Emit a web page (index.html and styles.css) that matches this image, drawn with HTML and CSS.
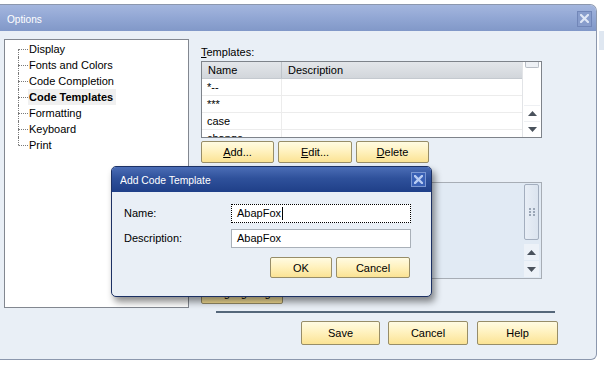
FILE: index.html
```html
<!DOCTYPE html>
<html>
<head>
<meta charset="utf-8">
<link rel="stylesheet" href="styles.css">
</head>
<body>
<div class="stage">
  <div class="backpiece"></div>
  <div class="window">
    <div class="titlebar">
      <span class="title">Options</span>
      <span class="close">
        <svg width="9" height="9" viewBox="0 0 9 9"><path d="M1 1 L8 8 M8 1 L1 8" stroke="#dfe7f6" stroke-width="2.2" stroke-linecap="square"/></svg>
      </span>
    </div>
    <div class="body">
      <div class="main">
        <div class="tree">
          <ul class="tree-list">
            <li class="node first"><span class="conn"><i></i><i></i></span><span class="txt">Display</span></li>
            <li class="node"><span class="conn"><i></i><i></i></span><span class="txt">Fonts and Colors</span></li>
            <li class="node"><span class="conn"><i></i><i></i></span><span class="txt">Code Completion</span></li>
            <li class="node"><span class="conn"><i></i><i></i></span><span class="txt sel">Code Templates</span></li>
            <li class="node"><span class="conn"><i></i><i></i></span><span class="txt">Formatting</span></li>
            <li class="node"><span class="conn"><i></i><i></i></span><span class="txt">Keyboard</span></li>
            <li class="node last"><span class="conn"><i></i><i></i></span><span class="txt">Print</span></li>
          </ul>
        </div>
        <div class="right">
          <div class="label"><u>T</u>emplates:</div>
          <div class="list">
            <div class="table">
              <div class="row hdr"><div class="c1">Name</div><div class="c2">Description</div></div>
              <div class="row"><div class="c1">*--</div><div class="c2"></div></div>
              <div class="row"><div class="c1">***</div><div class="c2"></div></div>
              <div class="row"><div class="c1">case</div><div class="c2"></div></div>
              <div class="row"><div class="c1">change</div><div class="c2"></div></div>
            </div>
            <div class="vscroll">
              <div class="thumb-top"></div>
              <div class="spacer"></div>
              <div class="arrow"><svg width="9" height="5" viewBox="0 0 9 5"><path d="M0 5 L4.5 0 L9 5 Z" fill="#4a525c"/></svg></div>
              <div class="arrow"><svg width="9" height="5" viewBox="0 0 9 5"><path d="M0 0 L4.5 5 L9 0 Z" fill="#4a525c"/></svg></div>
            </div>
          </div>
          <div class="btnrow">
            <button class="btn w73"><u>A</u>dd...</button>
            <button class="btn w74"><u>E</u>dit...</button>
            <button class="btn w73"><u>D</u>elete</button>
          </div>
          <div class="editor">
            <div class="edit-area"></div>
            <div class="vscroll2">
              <div class="thumb">
                <svg width="6" height="8" viewBox="0 0 6 8"><g fill="#9aa6b6"><rect x="0" y="0" width="2" height="2"/><rect x="4" y="0" width="2" height="2"/><rect x="0" y="3" width="2" height="2"/><rect x="4" y="3" width="2" height="2"/><rect x="0" y="6" width="2" height="2"/><rect x="4" y="6" width="2" height="2"/></g></svg>
              </div>
              <div class="arrow2"><svg width="9" height="5" viewBox="0 0 9 5"><path d="M0 5 L4.5 0 L9 5 Z" fill="#4a525c"/></svg></div>
              <div class="arrow2"><svg width="9" height="5" viewBox="0 0 9 5"><path d="M0 0 L4.5 5 L9 0 Z" fill="#4a525c"/></svg></div>
            </div>
          </div>
          <div class="btnrow2">
            <button class="btn w82">Highlighting</button>
          </div>
        </div>
      </div>
      <div class="sep"></div>
      <div class="footer">
        <button class="btn fb w79">Save</button>
        <button class="btn fb w80">Cancel</button>
        <button class="btn fb w81">Help</button>
      </div>
    </div>
  </div>

  <div class="dialog">
    <div class="dtitle">
      <span class="dtitle-text">Add Code Template</span>
      <span class="dclose">
        <svg width="9" height="9" viewBox="0 0 9 9"><path d="M1 1 L8 8 M8 1 L1 8" stroke="#b8ccf3" stroke-width="2.4" stroke-linecap="square"/></svg>
      </span>
    </div>
    <div class="dbody">
      <div class="dlabel">Name:</div>
      <div class="input focus">AbapFox<span class="caret"></span></div>
      <div class="dlabel">Description:</div>
      <div class="input">AbapFox</div>
      <div class="dbtns">
        <button class="btn w62">OK</button>
        <button class="btn w74">Cancel</button>
      </div>
    </div>
  </div>
</div>
</body>
</html>
```

FILE: styles.css
```css
* { box-sizing: border-box; }
html, body { margin: 0; padding: 0; background: #ffffff; }
body {
  font-family: "Liberation Sans", Arial, sans-serif;
  font-size: 11px;
  color: #000;
}
.stage {
  position: relative;
  width: 604px;
  height: 366px;
  overflow: hidden;
  padding-top: 4px;
}
.backpiece {
  position: absolute;
  left: 599px;
  top: 31px;
  width: 5px;
  height: 19px;
  background: #dfe7f1;
}
.window {
  width: 597px;
  height: 356px;
  border: 1px solid #8b97ad;
  border-left: none;
  border-radius: 0 7px 6px 0;
  background: #e9eff6;
  overflow: hidden;
  display: flex;
  flex-direction: column;
}
.titlebar {
  height: 26px;
  flex: none;
  background: linear-gradient(#a4b6de 0%, #93a8d5 45%, #8198c8 100%);
  display: flex;
  align-items: center;
  justify-content: space-between;
  padding: 0 4px 0 7px;
}
.title {
  color: #fff;
  font-size: 11.5px;
  display: inline-block;
  transform: scaleX(0.88);
  transform-origin: left center;
  margin-top: 1px;
}
.close {
  width: 15px;
  height: 16px;
  border: 1px solid #7186b8;
  background: #889dcc;
  display: flex;
  align-items: center;
  justify-content: center;
  margin-top: 1px;
}
.body {
  flex: 1;
  padding: 8px 0 0 4px;
  display: flex;
  flex-direction: column;
}
.main {
  display: flex;
  gap: 12px;
  height: 269px;
  flex: none;
}
.tree {
  width: 185px;
  height: 269px;
  background: #fff;
  border: 1px solid #828790;
  padding: 1px 0 0 13px;
}
.tree-list {
  list-style: none;
  margin: 0;
  padding: 0;
}
.node {
  display: flex;
  height: 16px;
  align-items: center;
}
.conn {
  width: 10px;
  height: 16px;
  display: flex;
  flex-direction: column;
  flex: none;
}
.conn i {
  display: block;
  height: 8px;
  border-left: 1px dotted #7a7a7a;
}
.conn i + i {
  border-top: 1px dotted #7a7a7a;
}
.node.first .conn i:first-child { border-left-color: transparent; }
.node.last .conn i + i { border-left-color: transparent; }
.txt {
  padding: 0 1px;
  line-height: 16px;
  white-space: nowrap;
}
.txt.sel {
  font-weight: bold;
  background: #f0f0f0;
  padding-right: 3px;
}
.right {
  width: 341px;
  padding-top: 6px;
  display: flex;
  flex-direction: column;
}
.label {
  line-height: 14px;
  height: 14px;
  margin-bottom: 2px;
}
.list {
  height: 77px;
  border: 1px solid #7e838a;
  background: #fff;
  display: flex;
  overflow: hidden;
}
.table {
  width: 321px;
  border-right: 1px solid #e2e4e7;
  overflow: hidden;
}
.row {
  display: flex;
  height: 17px;
  border-bottom: 1px solid #ececec;
}
.row .c1 {
  width: 80px;
  border-right: 1px solid #ececec;
  padding-left: 5px;
  line-height: 16px;
}
.row .c2 {
  flex: 1;
  padding-left: 6px;
  line-height: 16px;
}
.row.hdr {
  background: linear-gradient(#e3e6ea, #d2d6db);
  border-bottom: 1px solid #c4c9cf;
}
.row.hdr .c1 {
  border-right: 1px solid #bfc4ca;
  padding-left: 6px;
}
.vscroll {
  flex: 1;
  display: flex;
  flex-direction: column;
  align-items: center;
  background: #fff;
}
.thumb-top {
  width: 14px;
  height: 6px;
  border: 1px solid #b9bec6;
  border-top: none;
  border-radius: 0 0 2px 2px;
  background: #eef1f5;
}
.spacer { flex: 1; }
.arrow {
  width: 16px;
  height: 16px;
  display: flex;
  align-items: center;
  justify-content: center;
  border-top: 1px solid #eef0f3;
}
.btnrow {
  display: flex;
  gap: 4px;
  margin-top: 3px;
}
.btn {
  font-family: "Liberation Sans", Arial, sans-serif;
  font-size: 11px;
  color: #000;
  height: 22px;
  padding: 0;
  border: 1px solid #978d68;
  border-radius: 2px;
  background: linear-gradient(#fffbe2 0%, #fff2c0 45%, #fbe394 100%);
  display: flex;
  align-items: center;
  justify-content: center;
}
.w62 { width: 62px; }
.w73 { width: 73px; }
.w74 { width: 74px; }
.w79 { width: 79px; }
.w80 { width: 80px; }
.w81 { width: 81px; }
.w82 { width: 82px; }
.editor {
  margin-top: 19px;
  height: 97px;
  border: 1px solid #a7adb5;
  background: #e1eaf4;
  display: flex;
  padding: 1px 2px 1px 0;
}
.edit-area { flex: 1; }
.vscroll2 {
  width: 15px;
  display: flex;
  flex-direction: column;
}
.thumb {
  height: 57px;
  border: 1px solid #a3aebe;
  border-radius: 2px;
  background: linear-gradient(90deg, #e8eef6, #dbe4ef);
  display: flex;
  align-items: center;
  justify-content: center;
}
.arrow2 {
  height: 16px;
  margin-top: 4px;
  background: #edf2f8;
  display: flex;
  align-items: center;
  justify-content: center;
}
.arrow2 + .arrow2 { margin-top: 1px; }
.btnrow2 {
  margin-top: 3px;
  display: flex;
}
.sep {
  margin-top: 3px;
  margin-left: 212px;
  width: 339px;
  height: 2px;
  background: #55677a;
  flex: none;
}
.footer {
  margin-top: 8px;
  display: flex;
  justify-content: flex-end;
  gap: 8px;
  padding-right: 38px;
}
.btn.fb { height: 24px; }
.footer .w81 { margin-left: 1px; }

/* dialog */
.dialog {
  position: absolute;
  left: 111px;
  top: 166px;
  width: 321px;
  height: 131px;
  border: 1px solid #1c3164;
  border-radius: 5px;
  background: #e9eff6;
  box-shadow: 3px 5px 7px rgba(0, 0, 0, 0.45);
  overflow: hidden;
}
.dtitle {
  height: 25px;
  background: linear-gradient(#4b6db6 0%, #2f519b 45%, #1f3f88 100%);
  display: flex;
  align-items: center;
  justify-content: space-between;
  padding: 0 5px 0 8px;
}
.dtitle-text {
  color: #fff;
  font-size: 11.5px;
  display: inline-block;
  transform: scaleX(0.9);
  transform-origin: left center;
}
.dclose {
  width: 15px;
  height: 15px;
  border: 1px solid #7b97d2;
  background: #3a61b6;
  display: flex;
  align-items: center;
  justify-content: center;
}
.dbody {
  display: grid;
  grid-template-columns: 107px 180px;
  grid-auto-rows: 19px;
  row-gap: 6px;
  padding: 12px 20px 0 12px;
}
.dlabel {
  align-self: center;
  line-height: 19px;
}
.input {
  height: 19px;
  background: #fff;
  border: 1px solid #a9b0b8;
  padding-left: 5px;
  line-height: 17px;
  display: flex;
  align-items: center;
}
.input.focus {
  border: 1px dotted #000;
}
.caret {
  display: inline-block;
  width: 1px;
  height: 13px;
  background: #000;
  margin-left: 1px;
}
.dbtns {
  grid-column: 1 / -1;
  justify-self: end;
  display: flex;
  gap: 4px;
  margin-top: 3px;
  margin-right: 1px;
  height: 21px;
}
.dbtns .btn { height: 21px; }
```
